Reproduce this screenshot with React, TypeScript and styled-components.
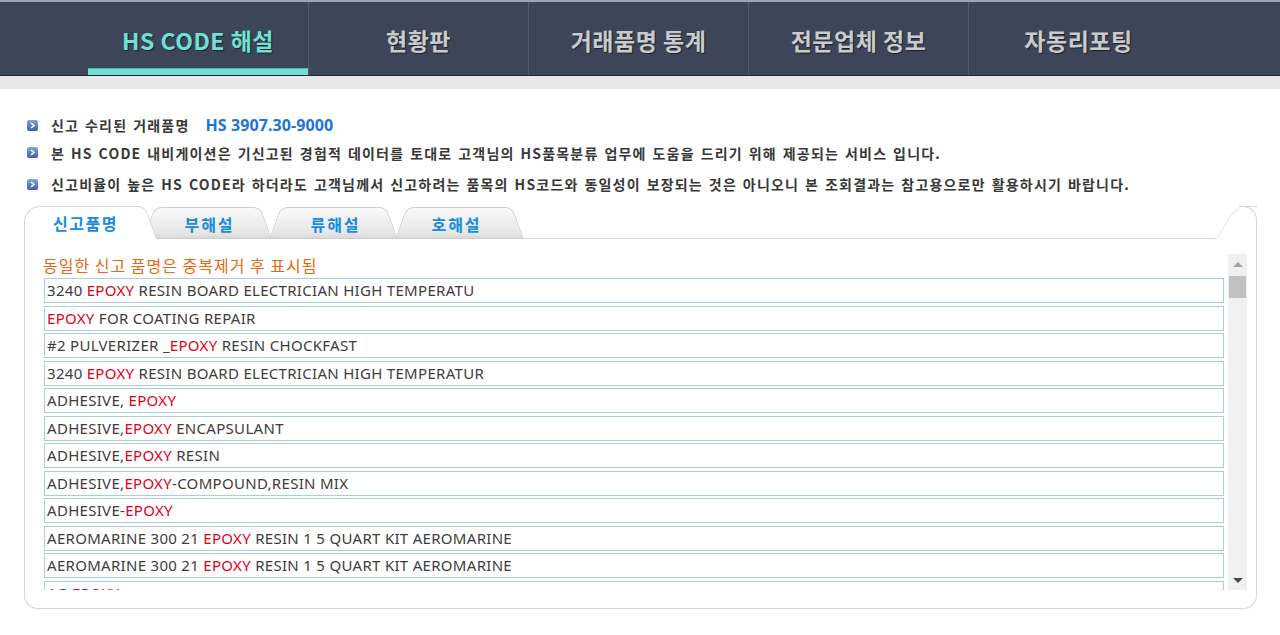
import React from "react";
import styled, { createGlobalStyle } from "styled-components";

const GlobalStyle = createGlobalStyle`
  html, body { margin: 0; padding: 0; background: #ffffff; }
  body { font-family: "Noto Sans CJK KR", "Noto Sans", sans-serif; }
  * { box-sizing: border-box; }
`;

const Nav = styled.nav`
  height: 76px;
  background: #3d4658;
  border-top: 2px solid #9ca4b2;
  border-bottom: 1px solid #1f2530;
  display: flex;
  padding-left: 88px;
`;

const NavItem = styled.div<{ $active?: boolean; $sep?: boolean }>`
  position: relative;
  width: 220px;
  display: flex;
  align-items: center;
  justify-content: center;
  padding-top: 2px;
  font: 700 23px "Noto Sans CJK KR", "Noto Sans", sans-serif;
  letter-spacing: 0.5px;
  color: ${(p) => (p.$active ? "#6fe1d6" : "#c9cbce")};
  border-left: ${(p) => (p.$sep ? "1px solid #525b6d" : "none")};
  text-shadow: 1px 1px 1px rgba(0, 0, 0, 0.55);
  &::after {
    content: "";
    display: ${(p) => (p.$active ? "block" : "none")};
    position: absolute;
    left: 0;
    right: 0;
    bottom: 0;
    height: 6px;
    background: #6ee0d6;
    border-top: 1px solid #47b9b0;
  }
`;

const GrayStrip = styled.div`
  height: 13px;
  background: #e8e8e8;
`;

const InfoList = styled.ul`
  list-style: none;
  margin: 0;
  padding: 22px 0 0 27px;
`;

const InfoItem = styled.li<{ $h: number; $mt?: number }>`
  display: flex;
  align-items: center;
  height: ${(p) => p.$h}px;
  margin-top: ${(p) => p.$mt ?? 0}px;
  font: 700 14px "Noto Sans CJK KR", "Noto Sans", sans-serif;
  color: #383838;
  letter-spacing: 1.2px;
  word-spacing: 1.5px;
  white-space: nowrap;
`;

const Bullet = styled.span`
  width: 11px;
  height: 11px;
  border-radius: 2px;
  background: linear-gradient(#86a6e0, #3a5fb0);
  display: flex;
  align-items: center;
  justify-content: center;
  margin-right: 13px;
  flex-shrink: 0;
`;

const Code = styled.span`
  margin-left: 16px;
  font: 700 16px "Noto Sans", sans-serif;
  letter-spacing: 0.1px;
  color: #1b74d6;
  word-spacing: 0;
`;

const TabBox = styled.div`
  margin: 8px 23px 0 24px;
`;

const TabBar = styled.div`
  display: flex;
  height: 33px;
`;

const ActiveTab = styled.div`
  position: relative;
  z-index: 10;
  width: 133px;
  height: 33px;
  flex-shrink: 0;
  display: flex;
  align-items: center;
  justify-content: center;
  padding: 1px 10px 0 0;
  font: 700 16px "Noto Sans CJK KR", sans-serif;
  letter-spacing: 1.5px;
  color: #168ce0;
  &::before {
    content: "";
    position: absolute;
    z-index: -1;
    left: 0;
    top: 0;
    bottom: 0;
    width: 80px;
    background: #fff;
    border-left: 1px solid #d6d6d6;
    border-top: 1px solid #d6d6d6;
    border-top-left-radius: 16px;
  }
  &::after {
    content: "";
    position: absolute;
    z-index: -1;
    right: 0;
    top: 0;
    bottom: 0;
    width: 80px;
    background: #fff;
    border-top: 1px solid #d6d6d6;
    border-right: 1px solid #d6d6d6;
    border-top-right-radius: 7px;
    transform-origin: bottom right;
    transform: skewX(20deg);
  }
`;

const Tab = styled.div<{ $z: number; $first?: boolean; $shift: number }>`
  position: relative;
  z-index: ${(p) => p.$z};
  width: 129px;
  height: 33px;
  flex-shrink: 0;
  margin-left: ${(p) => (p.$first ? -14 : -3)}px;
  display: flex;
  align-items: center;
  justify-content: center;
  padding-top: 2px;
  padding-left: ${(p) => Math.max(p.$shift, 0) * 2}px;
  padding-right: ${(p) => Math.max(-p.$shift, 0) * 2}px;
  font: 700 16px "Noto Sans CJK KR", sans-serif;
  color: #168ce0;
  letter-spacing: 2px;
  &::before,
  &::after {
    content: "";
    position: absolute;
    z-index: -1;
    top: 1px;
    bottom: 0;
    width: 60%;
    background: linear-gradient(#f9f9f9, #e6e6e6 85%, #d9d9d9);
    border: 1px solid #cecece;
  }
  &::before {
    left: 0;
    border-right: none;
    border-top-left-radius: 7px;
    transform-origin: bottom left;
    transform: skewX(-20deg);
  }
  &::after {
    right: 0;
    border-left: none;
    border-top-right-radius: 7px;
    transform-origin: bottom right;
    transform: skewX(20deg);
  }
`;

const Rest = styled.div`
  flex: 1;
  height: 33px;
  border-bottom: 1px solid #d6d6d6;
`;

const Ear = styled.div`
  position: relative;
  width: 42px;
  height: 33px;
  flex-shrink: 0;
  overflow: hidden;
  &::before {
    content: "";
    position: absolute;
    left: 0;
    top: 0;
    width: 32px;
    height: 33px;
    background: #fff;
    border-left: 1px solid #d6d6d6;
    border-top: 1px solid #d6d6d6;
    border-top-left-radius: 10px;
    transform-origin: bottom left;
    transform: skewX(-32deg);
  }
  &::after {
    content: "";
    position: absolute;
    right: 0;
    top: 0;
    width: 17px;
    height: 34px;
    background: #fff;
    border-top: 1px solid #d6d6d6;
    border-right: 1px solid #d6d6d6;
    border-top-right-radius: 14px;
  }
`;

const Body = styled.div`
  display: flex;
  border: 1px solid #d6d6d6;
  border-top: none;
  border-radius: 0 0 14px 14px;
  padding: 15px 9px 18px 18px;
  box-shadow: 0 1px 1px rgba(0, 0, 0, 0.05);
`;

const Viewport = styled.div`
  flex: 1;
  height: 336px;
  overflow: hidden;
`;

const Notice = styled.div`
  height: 22px;
  margin-bottom: 2px;
  font: 400 16px "Noto Sans CJK KR", sans-serif;
  letter-spacing: 1px;
  line-height: 22px;
  color: #e8670f;
`;

const Row = styled.div`
  height: 25px;
  margin: 0 4px 2.5px 1px;
  padding: 0 0 1px 2px;
  border: 1px solid #aecbdf;
  display: flex;
  align-items: center;
  font: 400 15px "Noto Sans", sans-serif;
  letter-spacing: 0.3px;
  color: #3d3d3d;
  white-space: pre;
  overflow: hidden;
`;

const Hl = styled.span`
  color: #e3001b;
`;

const Scrollbar = styled.div`
  width: 19px;
  height: 336px;
  background: #f0f0f0;
  display: flex;
  flex-direction: column;
  align-items: center;
`;

const ScrollButton = styled.div<{ $down?: boolean }>`
  height: 20px;
  width: 19px;
  display: flex;
  align-items: center;
  justify-content: center;
  &::before {
    content: "";
    border-left: 5px solid transparent;
    border-right: 5px solid transparent;
    ${(p) =>
      p.$down
        ? "border-top: 5px solid #4a4a4a;"
        : "border-bottom: 5px solid #a3a3a3;"}
  }
`;

const Thumb = styled.div`
  width: 17px;
  height: 22px;
  margin-top: 2px;
  background: #c1c1c1;
`;

const Spacer = styled.div`
  flex: 1;
`;

const rows: [string, string, string][] = [
  ["3240 ", "EPOXY", " RESIN BOARD ELECTRICIAN HIGH TEMPERATU"],
  ["", "EPOXY", " FOR COATING REPAIR"],
  ["#2 PULVERIZER _", "EPOXY", " RESIN CHOCKFAST"],
  ["3240 ", "EPOXY", " RESIN BOARD ELECTRICIAN HIGH TEMPERATUR"],
  ["ADHESIVE, ", "EPOXY", ""],
  ["ADHESIVE,", "EPOXY", " ENCAPSULANT"],
  ["ADHESIVE,", "EPOXY", " RESIN"],
  ["ADHESIVE,", "EPOXY", "-COMPOUND,RESIN MIX"],
  ["ADHESIVE-", "EPOXY", ""],
  ["AEROMARINE 300 21 ", "EPOXY", " RESIN 1 5 QUART KIT AEROMARINE"],
  ["AEROMARINE 300 21 ", "EPOXY", " RESIN 1 5 QUART KIT AEROMARINE"],
  ["AG ", "EPOXY", ""],
  ["AIRCRAFT PARTS ", "EPOXY", " ADHESIVE"],
];

const Chevron = () => (
  <svg width="7" height="7" viewBox="0 0 7 7">
    <path d="M2 1 L5 3.5 L2 6" stroke="#fff" strokeWidth="1.6" fill="none" />
  </svg>
);

export default function App() {
  return (
    <>
      <GlobalStyle />
      <Nav>
        <NavItem $active>HS CODE 해설</NavItem>
        <NavItem $sep>현황판</NavItem>
        <NavItem $sep>거래품명 통계</NavItem>
        <NavItem $sep>전문업체 정보</NavItem>
        <NavItem $sep>자동리포팅</NavItem>
      </Nav>
      <GrayStrip />
      <InfoList>
        <InfoItem $h={28}>
          <Bullet>
            <Chevron />
          </Bullet>
          신고 수리된 거래품명
          <Code>HS 3907.30-9000</Code>
        </InfoItem>
        <InfoItem $h={27}>
          <Bullet>
            <Chevron />
          </Bullet>
          본 HS CODE 내비게이션은 기신고된 경험적 데이터를 토대로 고객님의 HS품목분류 업무에 도움을 드리기 위해 제공되는 서비스 입니다.
        </InfoItem>
        <InfoItem $h={28} $mt={4}>
          <Bullet>
            <Chevron />
          </Bullet>
          신고비율이 높은 HS CODE라 하더라도 고객님께서 신고하려는 품목의 HS코드와 동일성이 보장되는 것은 아니오니 본 조회결과는 참고용으로만 활용하시기 바랍니다.
        </InfoItem>
      </InfoList>
      <TabBox>
        <TabBar>
          <ActiveTab>신고품명</ActiveTab>
          <Tab $z={9} $first $shift={2}>부해설</Tab>
          <Tab $z={8} $shift={2}>류해설</Tab>
          <Tab $z={7} $shift={-3}>호해설</Tab>
          <Rest />
          <Ear />
        </TabBar>
        <Body>
          <Viewport>
            <Notice>동일한 신고 품명은 중복제거 후 표시됨</Notice>
            {rows.map(([a, b, c], i) => (
              <Row key={i}>
                {a}
                <Hl>{b}</Hl>
                {c}
              </Row>
            ))}
          </Viewport>
          <Scrollbar>
            <ScrollButton />
            <Thumb />
            <Spacer />
            <ScrollButton $down />
          </Scrollbar>
        </Body>
      </TabBox>
    </>
  );
}
